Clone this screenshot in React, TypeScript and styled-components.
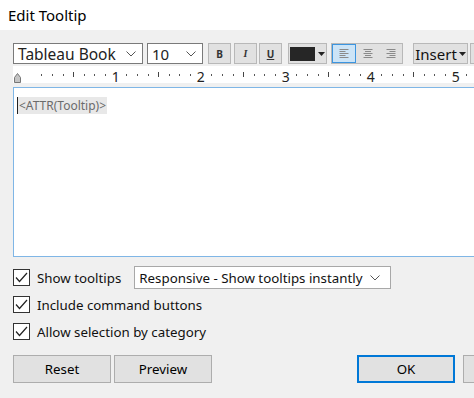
import React from 'react';
import styled, { createGlobalStyle } from 'styled-components';

const GlobalStyle = createGlobalStyle`
  body {
    margin: 0;
    background: #f0f0f0;
    font-family: 'Noto Sans', 'Open Sans', sans-serif;
    color: #000;
  }
`;

const Dialog = styled.div`
  width: 474px;
  height: 398px;
  overflow: hidden;
  background: #f0f0f0;
`;

const TitleBar = styled.div`
  height: 30px;
  background: #fff;
  padding-left: 8px;
  font-size: 15px;
  line-height: 30px;
  box-sizing: border-box;
`;

const Body = styled.div`
  padding: 13px 0 0 13px;
  display: flex;
  flex-direction: column;
`;

const Toolbar = styled.div`
  display: flex;
  align-items: stretch;
  height: 21px;
  white-space: nowrap;
`;

const Combo = styled.div<{ $width: number; $space?: number; $size?: number }>`
  flex: none;
  width: ${(p) => p.$width}px;
  margin-left: ${(p) => p.$space ?? 0}px;
  box-sizing: border-box;
  border: 1px solid #7a7a7a;
  background: #fff;
  display: flex;
  align-items: center;
  justify-content: space-between;
  padding: 0 6px 0 4px;
  font-size: ${(p) => p.$size ?? 14}px;
  color: #222;
`;

const ToolButton = styled.div<{ $width?: number; $space?: number; $active?: boolean; $flat?: boolean }>`
  flex: none;
  width: ${(p) => p.$width ?? 23}px;
  margin-left: ${(p) => p.$space ?? 0}px;
  box-sizing: border-box;
  border: 1px solid ${(p) => (p.$active ? '#3c95e0' : p.$flat ? 'transparent' : '#b8b8b8')};
  background: ${(p) => (p.$active ? '#cce4f7' : '#e1e1e1')};
  display: flex;
  align-items: center;
  justify-content: center;
  font-size: 10px;
  color: #333;
`;

const Group = styled.div<{ $space?: number }>`
  display: flex;
  flex: none;
  margin-left: ${(p) => p.$space ?? 0}px;
  border: 1px solid #b8b8b8;
  background: #e1e1e1;
`;

const Swatch = styled.div`
  width: 25px;
  height: 14px;
  background: #262626;
  margin-right: 3px;
`;

const InsertLabel = styled.span`
  font-size: 15px;
  color: #111;
  margin-right: 2px;
`;

const RulerBar = styled.div`
  margin-top: 2px;
  height: 17px;
  background: #fff;
  width: 480px;

  svg {
    overflow: visible;
    display: block;
  }
`;

const Editor = styled.div`
  margin-top: 4px;
  height: 170px;
  width: 480px;
  box-sizing: border-box;
  border: 1px solid #7fb6e6;
  background: #fff;
  padding: 5px 0 0 3px;
`;

const Token = styled.span`
  font-size: 12px;
  color: #6b6b6b;
  background: #e8e8e8;
  border-left: 1px solid #222;
  padding: 0 1px;
`;

const Options = styled.div`
  margin-top: 7px;
  display: flex;
  flex-direction: column;
`;

const OptionRow = styled.label`
  height: 27px;
  display: flex;
  align-items: center;
  font-size: 13.3px;
  color: #111;
`;

const Box = styled.span`
  flex: none;
  width: 17px;
  height: 17px;
  box-sizing: border-box;
  border: 1px solid #333;
  background: #fff;
  display: flex;
  align-items: center;
  justify-content: center;
  margin-right: 7px;
`;

const Select = styled.div`
  margin-left: 13px;
  width: 257px;
  height: 23px;
  box-sizing: border-box;
  border: 1px solid #a8a8a8;
  background: #fff;
  display: flex;
  align-items: center;
  justify-content: space-between;
  padding: 0 10px 0 4px;
  font-size: 13.3px;
`;

const Footer = styled.div`
  margin-top: 10px;
  display: flex;
  white-space: nowrap;
`;

const Button = styled.div<{ $space?: number; $default?: boolean }>`
  flex: none;
  width: 98px;
  height: 28px;
  margin-left: ${(p) => p.$space ?? 0}px;
  box-sizing: border-box;
  border: ${(p) => (p.$default ? '2px solid #0078d7' : '1px solid #adadad')};
  background: #e1e1e1;
  display: flex;
  align-items: center;
  justify-content: center;
  font-size: 13.3px;
`;

const Chevron = () => (
  <svg width="10" height="6" viewBox="0 0 10 6">
    <polyline points="0.5,0.5 5,5 9.5,0.5" fill="none" stroke="#555" strokeWidth="1" />
  </svg>
);

const Caret = () => (
  <svg width="7" height="4" viewBox="0 0 7 4">
    <polygon points="0,0 7,0 3.5,4" fill="#222" />
  </svg>
);

const Check = () => (
  <svg width="13" height="11" viewBox="0 0 13 11">
    <polyline points="1,5.5 4.5,9.5 12,1" fill="none" stroke="#222" strokeWidth="1.2" />
  </svg>
);

function AlignIcon ({ align }: { align: 'left' | 'center' | 'right' }) {
  const rows = [9, 6, 9, 6, 9];
  return (
    <svg width="10" height="9" viewBox="0 0 10 9">
      {rows.map((w, i) => {
        const x = align === 'left' ? 0.5 : align === 'right' ? 9.5 - w : (10 - w) / 2;
        return <rect key={i} x={x} y={i * 2} width={w} height="1" fill="#8a8a8a" />;
      })}
    </svg>
  );
}

function Ruler () {
  const origin = 17.7;
  const inch = 85;
  const marks: React.ReactNode[] = [];
  for (let i = 1; i < 48; i++) {
    const x = origin + (i * inch) / 8;
    if (i % 8 === 0) {
      marks.push(
        <text key={i} x={x} y={15.5} fontSize="14" textAnchor="middle" fill="#222" fontFamily="'Noto Sans', sans-serif">{i / 8}</text>
      );
    } else if (i % 4 === 0) {
      marks.push(<rect key={i} x={Math.round(x)} y={6} width="1" height="5" fill="#444" />);
    } else {
      marks.push(<rect key={i} x={Math.round(x)} y={8} width="1" height="2" fill="#555" />);
    }
  }
  return (
    <RulerBar>
      <svg width="480" height="17" viewBox="0 0 480 17">
        {marks}
        <path d="M1.5,16.5 L1.5,11.5 L4.5,7.5 L7.5,11.5 L7.5,16.5 Z" fill="#c4c4c4" stroke="#777" strokeWidth="1" />
      </svg>
    </RulerBar>
  );
}

const options = [
  { label: 'Show tooltips', select: 'Responsive - Show tooltips instantly' },
  { label: 'Include command buttons' },
  { label: 'Allow selection by category' }
];

export default function App () {
  return (
    <Dialog>
      <GlobalStyle />
      <TitleBar>Edit Tooltip</TitleBar>
      <Body>
        <Toolbar>
          <Combo $width={130} $size={15.5}>Tableau Book<Chevron /></Combo>
          <Combo $width={56} $space={4} $size={15}>10<Chevron /></Combo>
          <ToolButton $space={5}><b>B</b></ToolButton>
          <ToolButton $space={3}><i style={{ fontFamily: 'serif', fontWeight: 700 }}>I</i></ToolButton>
          <ToolButton $space={2}><u style={{ fontWeight: 700 }}>U</u></ToolButton>
          <ToolButton $width={39} $space={6}><Swatch /><Caret /></ToolButton>
          <Group $space={4}>
            <ToolButton $width={24} $active><AlignIcon align="left" /></ToolButton>
            <ToolButton $flat><AlignIcon align="center" /></ToolButton>
            <ToolButton $flat><AlignIcon align="right" /></ToolButton>
          </Group>
          <ToolButton $width={55} $space={10}>
            <InsertLabel>Insert</InsertLabel><Caret />
          </ToolButton>
          <ToolButton $width={20} $space={2} />
        </Toolbar>
        <Ruler />
        <Editor><Token>&lt;ATTR(Tooltip)&gt;</Token></Editor>
        <Options>
          {options.map((o) => (
            <OptionRow key={o.label}>
              <Box><Check /></Box>
              {o.label}
              {o.select && <Select>{o.select}<Chevron /></Select>}
            </OptionRow>
          ))}
        </Options>
        <Footer>
          <Button>Reset</Button>
          <Button $space={3}>Preview</Button>
          <Button $space={145} $default>OK</Button>
          <Button $space={8} />
        </Footer>
      </Body>
    </Dialog>
  );
}
